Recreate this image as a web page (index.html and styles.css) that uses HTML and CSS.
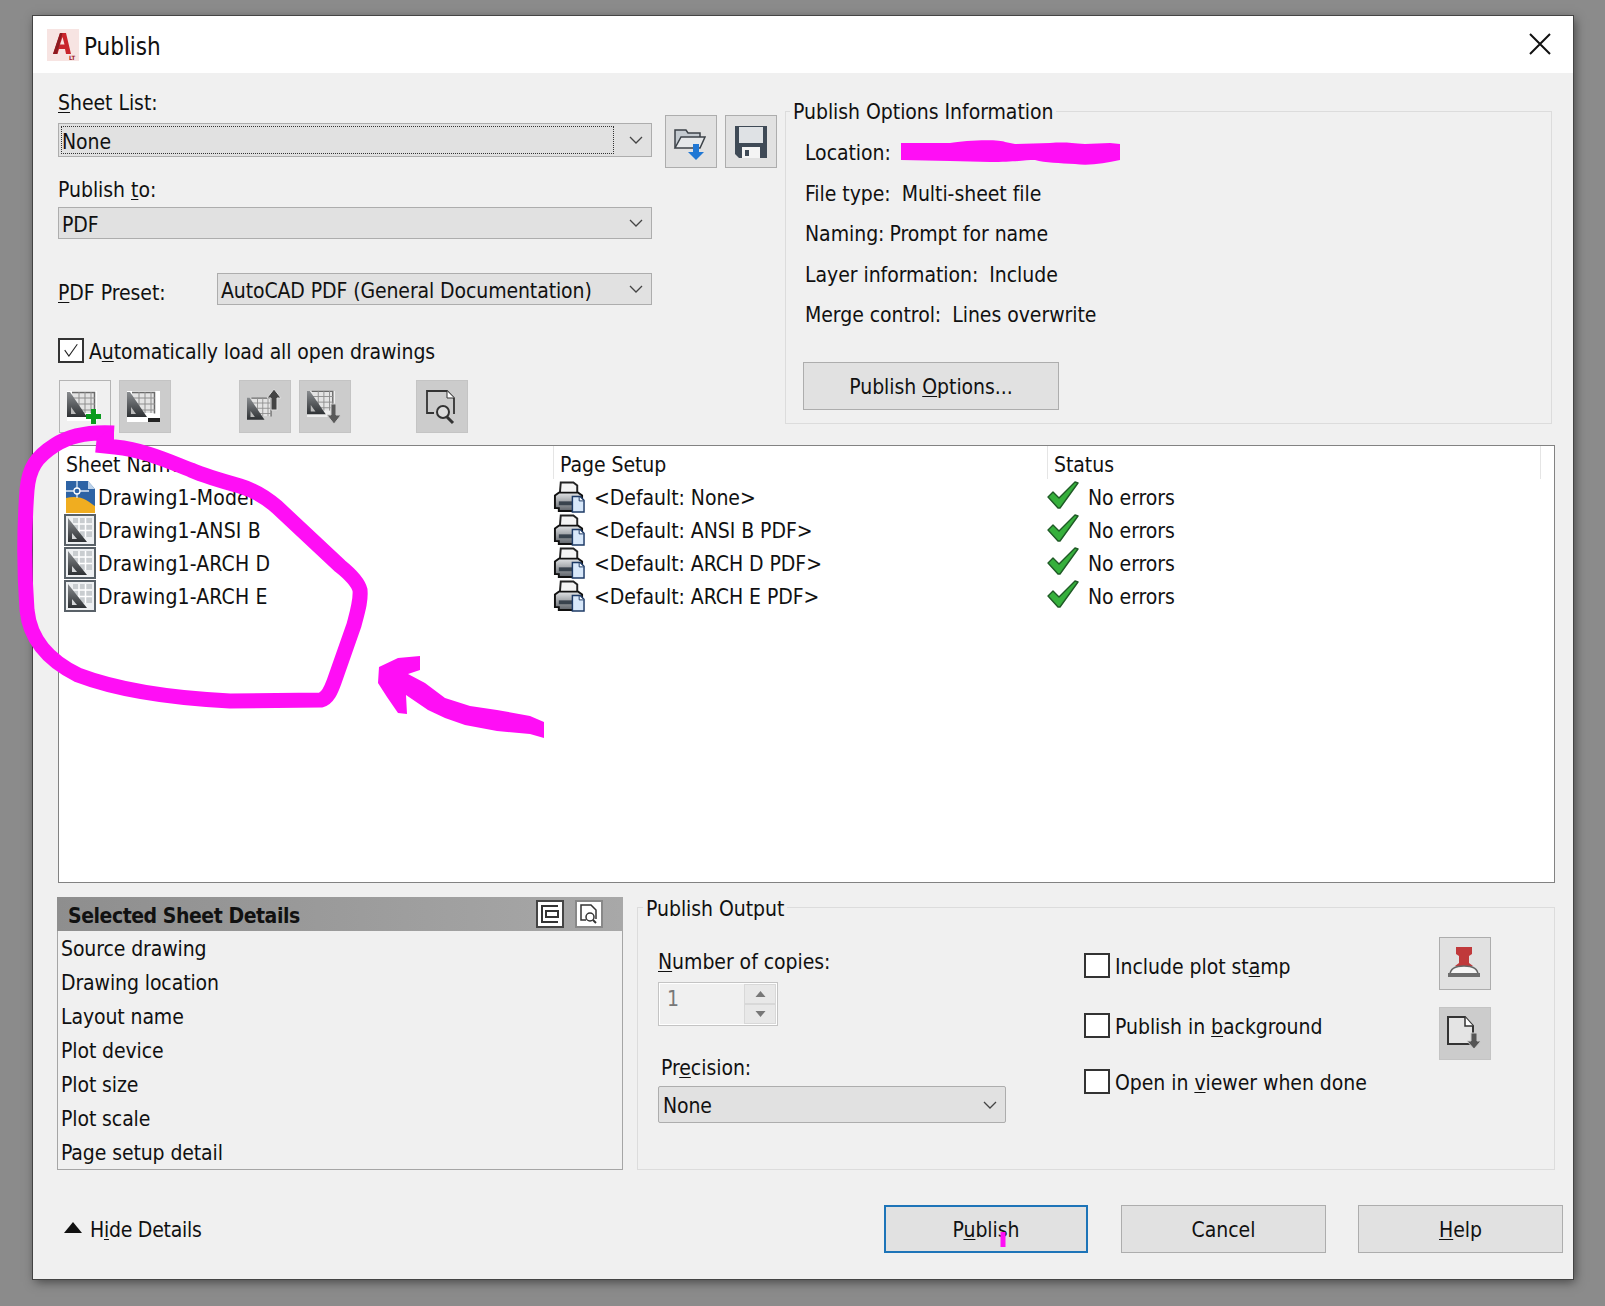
FILE: index.html
```html
<!DOCTYPE html>
<html lang="en">
<head>
    <meta charset="UTF-8">
    <title>Publish</title>
    <link rel="stylesheet" href="styles.css">
</head>
<body>
    <svg class="defs" width="0" height="0">
        <defs>
            <linearGradient id="g-tri" x1="0" y1="0" x2="0" y2="1">
                <stop offset="0" stop-color="#8a8d90"/>
                <stop offset="1" stop-color="#2e3134"/>
            </linearGradient>
            <linearGradient id="g-printer" x1="0" y1="0" x2="0" y2="1">
                <stop offset="0" stop-color="#e2e4e6"/>
                <stop offset="1" stop-color="#5d6268"/>
            </linearGradient>
        </defs>
        <symbol id="i-sheet" viewBox="0 0 32 32">
            <rect x="1" y="1" width="30" height="30" fill="#eef0f2" stroke="#596168" stroke-width="2"/>
            <rect x="9" y="4" width="19" height="19" fill="#c9cdd0"/>
            <path d="M15 4v19M21.500 4v19M9 10h19M9 16.500h19" stroke="#fff" stroke-width="1.500" fill="none"/>
            <path d="M4 4l19 24H4z" fill="url(#g-tri)"/>
            <path d="M8 19l5 6H8z" fill="#d5d7d9"/>
        </symbol>
        <symbol id="i-model" viewBox="0 0 32 32">
            <path d="M2 0h22l7 8v24H2z" fill="#2d63a5"/>
            <path d="M24 0l7 8h-7z" fill="#bcd2ea"/>
            <path d="M2 17c8-2 15-1 20 2 4 2 7 5 9 6v7H2z" fill="#f0ad20"/>
            <path d="M13 0v17M2 10h23" stroke="#dbe8f5" stroke-width="1.300"/>
            <circle cx="13" cy="10" r="3" fill="#2d63a5" stroke="#fff" stroke-width="1.300"/>
        </symbol>
        <symbol id="i-printer" viewBox="0 0 33 33">
            <path d="M8 1.500h13l4 3v9H7z" fill="#f4f4f4" stroke="#222" stroke-width="2"/>
            <path d="M2 15l4-3h20l4 3v13h-4v3H6v-3H2z" fill="url(#g-printer)" stroke="#111" stroke-width="2"/>
            <path d="M6 21h14v4H6z" fill="#39434d"/>
            <path d="M20 16h8l4 4v12H20z" fill="#d8e8fa" stroke="#1d3a66" stroke-width="1.500"/>
            <path d="M27 16.500v4h4.500" fill="#fff" stroke="#1d3a66"/>
        </symbol>
        <symbol id="i-check" viewBox="0 0 32 32">
            <path d="M1 16l5-5 6 6L28 1l3 1-18 25h-2z" fill="#36b03c" stroke="#1f5a26" stroke-width="1.400" stroke-linejoin="round"/>
        </symbol>
        <symbol id="i-base" viewBox="0 0 32 32">
            <rect x="5" y="2" width="23" height="21" fill="#e4e4e4"/>
            <path d="M5 2.500h22.500v21" fill="none" stroke="#6a6a6a" stroke-width="1.500"/>
            <path d="M12 2v21M18 2v21M24 2v21M5 8h23M5 14h23M5 20h23" stroke="#8e8e8e" fill="none"/>
            <path d="M0 2h3l17 25H0z" fill="url(#g-tri)"/>
            <path d="M4 17l5 7H4z" fill="#bbb"/>
        </symbol>
    </svg>

    <div class="dialog">
        <div class="titlebar">
            <svg class="logo" viewBox="0 0 32 32">
                <rect width="32" height="32" fill="#f7e4e2"/>
                <path d="M6 25L13 4h6l5 21h-5l-1-5h-6l-1.500 5zM13 15.500h4.500L15.500 8z" fill="#c9252c" fill-rule="evenodd"/>
                <path d="M6 25L13 4h2.500L10 25z" fill="#8c1a20"/>
                <text x="22" y="31" class="logo-lt">LT</text>
            </svg>
            <span class="title">Publish</span>
            <svg class="close" viewBox="0 0 22 22"><path d="M1 1l20 20M21 1L1 21" stroke="#111" stroke-width="2" fill="none"/></svg>
        </div>

        <div class="top">
            <div class="form-col">
                <div class="lbl"><u>S</u>heet List:</div>
                <div class="combo sheet-combo">
                    <span class="combo-focus">None</span>
                    <svg class="chev" viewBox="0 0 14 8"><path d="M1 1l6 6 6-6" stroke="#444" stroke-width="1.300" fill="none"/></svg>
                </div>
                <div class="lbl publish-lbl">Publish <u>t</u>o:</div>
                <div class="combo publish-combo">
                    <span class="combo-text">PDF</span>
                    <svg class="chev" viewBox="0 0 14 8"><path d="M1 1l6 6 6-6" stroke="#444" stroke-width="1.300" fill="none"/></svg>
                </div>
                <div class="preset-row">
                    <div class="lbl preset-lbl"><u>P</u>DF Preset:</div>
                    <div class="combo preset-combo">
                        <span class="combo-text">AutoCAD PDF (General Documentation)</span>
                        <svg class="chev" viewBox="0 0 14 8"><path d="M1 1l6 6 6-6" stroke="#444" stroke-width="1.300" fill="none"/></svg>
                    </div>
                </div>
                <div class="check-row auto-load">
                    <span class="box"><svg viewBox="0 0 25 25"><path d="M5 12l5 7L20 5" stroke="#222" stroke-width="1.300" fill="none"/></svg></span>
                    <span class="check-text">A<u>u</u>tomatically load all open drawings</span>
                </div>
                <div class="toolbar">
                    <div class="ibtn ibtn-on">
                        <svg viewBox="0 0 36 36"><rect x="0" y="2" width="30" height="30" fill="#fff"/><use href="#i-base" width="32" height="32" y="1"/><path d="M24 20h5v5h5v5h-5v5h-5v-5h-5v-5h5z" fill="#0a9b1e"/></svg>
                    </div>
                    <div class="ibtn ibtn-off">
                        <svg viewBox="0 0 36 36"><rect x="0" y="2" width="33" height="31" fill="#fff"/><use href="#i-base" width="32" height="32" y="1"/><rect x="21" y="29" width="12" height="4" fill="#222"/></svg>
                    </div>
                    <div class="ibtn ibtn-off gap-a">
                        <svg viewBox="0 0 36 36"><use href="#i-base" width="28" height="30" y="6"/><path d="M27 0l7 9h-4v12h-6V9h-4z" fill="#444" stroke="#ddd"/></svg>
                    </div>
                    <div class="ibtn ibtn-off">
                        <svg viewBox="0 0 36 36"><rect x="0" y="2" width="28" height="26" fill="#eee"/><use href="#i-base" width="30" height="30"/><path d="M24 15h5v11h5l-7 9-7-9h4z" fill="#5a5a5a" stroke="#ccc"/></svg>
                    </div>
                    <div class="ibtn ibtn-off gap-b">
                        <svg viewBox="0 0 36 36"><path d="M10 24H3V2h20l7 7v16" fill="none" stroke="#333" stroke-width="1.800"/><path d="M23 2v7h7" fill="#fff" stroke="#333"/><circle cx="19" cy="23" r="6" fill="#ddd" stroke="#333" stroke-width="2"/><path d="M23 28l6 6" stroke="#333" stroke-width="3"/></svg>
                    </div>
                </div>
            </div>

            <div class="file-btns">
                <div class="ibtn ibtn-light">
                    <svg viewBox="0 0 36 36"><path d="M2 6h11l2 3h12v14H2z" fill="#c4cad0" stroke="#3c4248" stroke-width="1.500"/><path d="M2 24l6-11h24l-5 11z" fill="#e6e8ea" stroke="#3c4248" stroke-width="1.500"/><path d="M20 20h6v8h5l-8 8-8-8h5z" fill="#1f77d4"/></svg>
                </div>
                <div class="ibtn ibtn-light">
                    <svg viewBox="0 0 36 36"><path d="M2 2h32v32H6l-4-4z" fill="#3f4a56"/><rect x="6" y="3" width="24" height="16" fill="#dfe2e5"/><rect x="9" y="23" width="18" height="11" fill="#f4f4f4"/><rect x="12" y="26" width="4" height="6" fill="#3f4a56"/></svg>
                </div>
            </div>

            <fieldset class="group options">
                <legend>Publish Options Information</legend>
                <div class="info-row"><span>Location:</span></div>
                <div class="info-row"><span>File type:</span><span>Multi-sheet file</span></div>
                <div class="info-row naming"><span>Naming:</span><span>Prompt for name</span></div>
                <div class="info-row"><span>Layer information:</span><span>Include</span></div>
                <div class="info-row"><span>Merge control:</span><span>Lines overwrite</span></div>
                <div class="btn options-btn"><span>Publish <u>O</u>ptions...</span></div>
            </fieldset>
        </div>

        <div class="sheets">
            <div class="sheets-head">
                <div class="head-cell">Sheet Name</div>
                <div class="head-cell head-sep">Page Setup</div>
                <div class="head-cell head-sep head-last">Status</div>
            </div>
            <div class="sheet-row">
                <div class="cell cell-name"><svg class="ico"><use href="#i-model"/></svg>Drawing1-Model</div>
                <div class="cell cell-setup"><svg class="ico"><use href="#i-printer"/></svg>&lt;Default: None&gt;</div>
                <div class="cell cell-status"><svg class="ico"><use href="#i-check"/></svg>No errors</div>
            </div>
            <div class="sheet-row">
                <div class="cell cell-name"><svg class="ico"><use href="#i-sheet"/></svg>Drawing1-ANSI B</div>
                <div class="cell cell-setup"><svg class="ico"><use href="#i-printer"/></svg>&lt;Default: ANSI B PDF&gt;</div>
                <div class="cell cell-status"><svg class="ico"><use href="#i-check"/></svg>No errors</div>
            </div>
            <div class="sheet-row">
                <div class="cell cell-name"><svg class="ico"><use href="#i-sheet"/></svg>Drawing1-ARCH D</div>
                <div class="cell cell-setup"><svg class="ico"><use href="#i-printer"/></svg>&lt;Default: ARCH D PDF&gt;</div>
                <div class="cell cell-status"><svg class="ico"><use href="#i-check"/></svg>No errors</div>
            </div>
            <div class="sheet-row">
                <div class="cell cell-name"><svg class="ico"><use href="#i-sheet"/></svg>Drawing1-ARCH E</div>
                <div class="cell cell-setup"><svg class="ico"><use href="#i-printer"/></svg>&lt;Default: ARCH E PDF&gt;</div>
                <div class="cell cell-status"><svg class="ico"><use href="#i-check"/></svg>No errors</div>
            </div>
        </div>

        <div class="bottom">
            <div class="details">
                <div class="details-head">
                    <span class="details-title">Selected Sheet Details</span>
                    <svg class="mini" viewBox="0 0 28 28"><rect x="1" y="1" width="26" height="26" fill="#fff" stroke="#444" stroke-width="2"/><path d="M22 6H6v16h16M10 11h12v6H10z" fill="none" stroke="#333" stroke-width="2"/></svg>
                    <svg class="mini" viewBox="0 0 28 28"><rect x="1" y="1" width="26" height="26" fill="#fff" stroke="#888" stroke-width="2"/><path d="M11 20H6V5h10l5 5v9" fill="none" stroke="#333" stroke-width="1.500"/><circle cx="15" cy="17" r="4" fill="none" stroke="#333" stroke-width="1.500"/><path d="M18 20l3 3" stroke="#333" stroke-width="2"/></svg>
                </div>
                <div class="details-row">Source drawing</div>
                <div class="details-row">Drawing location</div>
                <div class="details-row">Layout name</div>
                <div class="details-row">Plot device</div>
                <div class="details-row">Plot size</div>
                <div class="details-row">Plot scale</div>
                <div class="details-row">Page setup detail</div>
            </div>

            <fieldset class="group output">
                <legend>Publish Output</legend>
                <div class="output-body">
                    <div class="output-left">
                        <div class="lbl"><u>N</u>umber of copies:</div>
                        <div class="spinner">
                            <span class="spin-val">1</span>
                            <span class="spin-arrows">
                                <span class="spin-btn"><svg viewBox="0 0 10 6"><path d="M5 0l5 6H0z" fill="#777"/></svg></span>
                                <span class="spin-btn"><svg viewBox="0 0 10 6"><path d="M5 6l5-6H0z" fill="#777"/></svg></span>
                            </span>
                        </div>
                        <div class="lbl precision-lbl">Pr<u>e</u>cision:</div>
                        <div class="combo precision-combo">
                            <span class="combo-text">None</span>
                            <svg class="chev" viewBox="0 0 14 8"><path d="M1 1l6 6 6-6" stroke="#444" stroke-width="1.300" fill="none"/></svg>
                        </div>
                    </div>
                    <div class="output-checks">
                        <div class="check-row"><span class="box"></span><span class="check-text">Include plot st<u>a</u>mp</span></div>
                        <div class="check-row check-2"><span class="box"></span><span class="check-text">Publish in <u>b</u>ackground</span></div>
                        <div class="check-row check-3"><span class="box"></span><span class="check-text">Open in <u>v</u>iewer when done</span></div>
                    </div>
                    <div class="output-icons">
                        <div class="ibtn ibtn-light">
                            <svg viewBox="0 0 36 36"><path d="M9 1h16v7l-3 2v7l4 3H8l4-3v-7L9 8z" fill="#c0393b"/><path d="M3 29c0-6 5-9 14-9s14 3 14 9z" fill="#f6f6f6" stroke="#666" stroke-width="1.500"/><path d="M1 27h32v4H1z" fill="#6e6e6e"/></svg>
                        </div>
                        <div class="ibtn ibtn-off">
                            <svg viewBox="0 0 36 36"><path d="M1 1h17l8 9v18H1z" fill="#e4e4e4" stroke="#333" stroke-width="2"/><path d="M18 1v9h8" fill="#fff" stroke="#333" stroke-width="1.500"/><path d="M24 17h6v8h4l-7 8-7-8h4z" fill="#555" stroke="#ccc"/></svg>
                        </div>
                    </div>
                </div>
            </fieldset>
        </div>

        <div class="footer">
            <div class="hide-details">
                <svg class="tri" viewBox="0 0 18 11"><path d="M9 0l9 11H0z" fill="#111"/></svg>
                <span class="check-text">H<u>i</u>de Details</span>
            </div>
            <div class="btn foot-btn foot-default"><span>P<u>u</u>blish</span></div>
            <div class="btn foot-btn foot-cancel">Cancel</div>
            <div class="btn foot-btn"><span><u>H</u>elp</span></div>
        </div>
    </div>

    <!-- pen scribbles on top of the screenshot -->
    <svg class="marker" viewBox="0 0 1605 1306">
        <path d="M114 433C96 432 72 434 55 445 36 457 29 468 27 490 24 530 24 570 27 610 30 640 48 660 78 675 120 691 170 698 230 701L321 700C328 698 331 690 334 682L354 625C358 610 361 600 360 590 358 582 350 574 340 566L277 507C262 494 250 489 240 486 222 481 205 476 191 470 170 462 145 450 115 447L96 445" fill="none" stroke="#ff0ef5" stroke-width="15" stroke-linejoin="round"/>
        <path d="M114 426v14h-18z" fill="#ff0ef5"/>
        <path d="M379 667L398 658 420 656V670L408 674 425 683 445 698 470 706 497 710 530 716 544 722V738L530 734 497 731 465 725 445 718 428 710 406 695 407 714 398 713 387 697 378 683Z" fill="#ff0ef5"/>
        <path d="M901 143L950 143C965 140 1000 139 1005 142L1015 144 1050 143C1065 142 1070 143 1085 144L1110 143 1120 144V160C1105 163 1090 166 1075 164 1060 163 1045 163 1035 160 1025 160 1015 162 990 162L950 161 901 160Z" fill="#ff0ef5"/>
        <path d="M1003 1232v15" stroke="#ff0ef5" stroke-width="5" fill="none"/>
    </svg>
</body>
</html>
```

FILE: styles.css
```css
body {
    margin: 0;
    padding: 16px 0 0 33px;
    height: 1306px;
    box-sizing: border-box;
    overflow: hidden;
    background: #8b8b8b;
    font-family: "DejaVu Sans", Tahoma, sans-serif;
    font-stretch: condensed;
    font-size: 21px;
    letter-spacing: -0.04px;
    color: #111;
}
u { text-underline-offset: 2px; text-decoration-thickness: 1px; }
.defs { position: absolute; }

.dialog {
    width: 1540px;
    height: 1263px;
    box-sizing: border-box;
    background: #f0f0f0;
    box-shadow: 0 0 0 1px #444, 2px 3px 10px rgba(0,0,0,0.5);
}

.titlebar { height: 57px; background: #fff; display: flex; align-items: center; padding: 0 22px 0 14px; }
.logo { width: 32px; height: 32px; }
.logo-lt { font-size: 6px; fill: #a02028; font-weight: bold; }
.title { margin-left: 5px; padding-top: 4px; font-size: 24px; flex: 1; }
.close { width: 22px; height: 22px; margin-top: -2px; }

.top { display: flex; height: 372px; }
.form-col { width: 594px; margin-left: 25px; padding-top: 17px; }
.lbl { height: 24px; line-height: 26px; }

.combo {
    display: flex;
    align-items: center;
    justify-content: space-between;
    box-sizing: border-box;
    background: #e1e1e1;
    border: 1px solid #adadad;
    padding: 0 8px 0 3px;
}
.combo-text { padding-top: 3px; letter-spacing: -0.1px; }
.chev { width: 14px; height: 8px; flex: none; }
.sheet-combo { height: 34px; margin-top: 9px; }
.combo-focus { flex: 1; height: 28px; line-height: 30px; margin: 0 15px 0 -1px; border: 1px dotted #333; box-sizing: border-box; padding-left: 0; }
.publish-lbl { margin-top: 21px; line-height: 24px; }
.publish-combo { height: 32px; margin-top: 5px; }
.preset-row { display: flex; justify-content: space-between; margin-top: 34px; }
.preset-lbl { padding-top: 8px; line-height: 24px; }
.preset-combo { width: 435px; height: 32px; }
.check-row { display: flex; align-items: center; gap: 5px; height: 25px; }
.check-text { padding-top: 2px; }
.auto-load { margin-top: 33px; letter-spacing: -0.1px; }
.box { width: 26px; height: 25px; box-sizing: border-box; background: #fff; border: 2px solid #333; display: block; flex: none; }
.box svg { display: block; width: 22px; height: 21px; }

.toolbar { display: flex; gap: 8px; margin: 17px 0 0 1px; }
.gap-a { margin-left: 60px; }
.gap-b { margin-left: 57px; }
.ibtn { width: 52px; height: 53px; box-sizing: border-box; display: flex; align-items: center; justify-content: center; flex: none; }
.ibtn svg { width: 36px; height: 36px; }
.ibtn-on { background: #f0f0f0; border: 1px solid #b4b4b4; }
.ibtn-off { background: #cccccc; border: 1px solid #c4c4c4; }
.ibtn-light { background: #e1e1e1; border: 1px solid #adadad; }

.file-btns { display: flex; gap: 8px; margin: 42px 0 0 13px; align-self: flex-start; }

.group { margin: 0; padding: 0; border: 1px solid #dcdcdc; box-sizing: border-box; min-width: 0; }
.group legend { margin-left: 5px; padding: 0 3px; height: 24px; line-height: 26px; }
.options { width: 767px; height: 325px; margin: 26px 0 0 8px; padding-left: 19px; }
.options legend { margin-left: -15px; }
.info-row { display: flex; gap: 11px; height: 24px; line-height: 24px; margin-top: 16.500px; }
.info-row:first-of-type { margin-top: 18px; }
.naming { gap: 5px; }

.btn {
    display: flex;
    align-items: center;
    justify-content: center;
    box-sizing: border-box;
    padding-top: 2px;
    background: #e1e1e1;
    border: 1px solid #adadad;
}
.options-btn { width: 256px; height: 48px; margin: 35px 0 0 -2px; }

.sheets { width: 1497px; height: 438px; margin: 0 0 0 25px; box-sizing: border-box; background: #fff; border: 1px solid #828282; }
.sheets-head { display: grid; grid-template-columns: 494px 494px 494px; height: 35px; }
.head-cell { padding: 3px 0 0 6px; line-height: 32px; height: 33px; box-sizing: border-box; }
.head-cell:first-child { padding-left: 7px; }
.head-sep { border-left: 1px solid #e5e5e5; }
.head-last { border-right: 1px solid #e5e5e5; }
.sheet-row { display: grid; grid-template-columns: 494px 494px 494px; height: 33px; }
.cell { display: flex; align-items: flex-start; line-height: 35px; height: 33px; white-space: nowrap; }
.ico { width: 32px; height: 32px; flex: none; }
.cell-name { padding-left: 5px; gap: 2px; letter-spacing: 0.15px; }
.cell-setup { gap: 9px; }
.cell-status { gap: 9px; }

.bottom { display: flex; margin: 14px 0 0 24px; }
.details { width: 566px; height: 273px; box-sizing: border-box; border: 1px solid #a5a5a5; }
.details-head { display: flex; align-items: center; height: 34px; padding: 0 20px 0 11px; gap: 11px; background: linear-gradient(to right, #8e8e8e, #a8a8a8); margin: -1px -1px 0 -1px; }
.details-title { font-weight: bold; flex: 1; padding-top: 3px; letter-spacing: -0.45px; }
.mini { width: 28px; height: 28px; }
.details-row { height: 34px; line-height: 36px; padding-left: 3px; letter-spacing: -0.1px; }

.output { width: 918px; height: 273px; margin-left: 14px; }
.output legend { height: 20px; line-height: 24px; }
.output-body { display: flex; padding-left: 20px; }
.output-left { width: 426px; padding-top: 32px; }
.spinner { display: flex; justify-content: space-between; width: 120px; height: 44px; margin-top: 9px; box-sizing: border-box; background: #f0f0f0; border: 1px solid #c4c4c4; box-shadow: inset 0 0 0 1px #fff; color: #777; padding: 1px 1px 1px 8px; }
.spin-val { line-height: 31px; }
.spin-arrows { display: flex; flex-direction: column; width: 32px; height: 100%; }
.spin-btn { flex: 1; display: flex; align-items: center; justify-content: center; background: #e8e8e8; border: 1px solid #d8d8d8; box-sizing: border-box; }
.spin-btn svg { width: 11px; height: 6px; }
.precision-lbl { margin: 30px 0 0 3px; line-height: 24px; }
.precision-combo { width: 348px; height: 37px; margin-top: 6px; border-radius: 2px; }
.precision-combo .combo-text { padding: 2px 0 0 1px; }
.output-checks { width: 355px; padding-top: 36px; }
.check-2 { margin-top: 35px; }
.check-3 { margin-top: 31px; }
.output-icons { display: flex; flex-direction: column; gap: 17px; padding-top: 20px; }

.footer { display: flex; align-items: center; margin-top: 35px; padding-left: 31px; }
.hide-details { display: flex; align-items: center; gap: 8px; width: 820px; flex: none; letter-spacing: -0.25px; }
.tri { width: 18px; height: 11px; margin-top: -4px; }
.foot-btn { width: 205px; height: 48px; flex: none; }
.foot-default { border: 2px solid #1d74b8; width: 204px; }
.foot-cancel { margin: 0 32px 0 33px; }

.marker { position: absolute; left: 0; top: 0; width: 1605px; height: 1306px; pointer-events: none; }
```
